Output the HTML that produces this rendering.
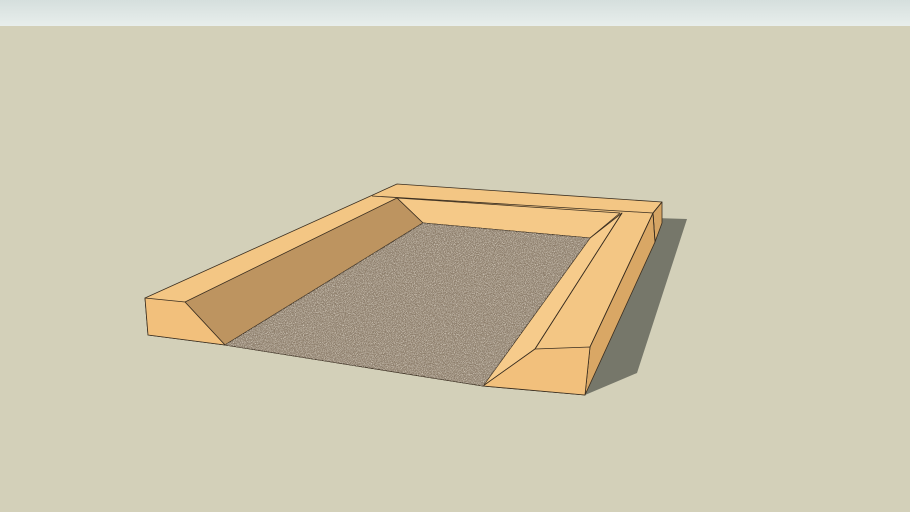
<!DOCTYPE html>
<html><head><style>
html,body{margin:0;padding:0;width:910px;height:512px;overflow:hidden;background:#d3d0b9;}
.sky{position:absolute;left:0;top:0;width:910px;height:26px;background:linear-gradient(#d5dfdd,#e8eeec);}
svg{position:absolute;left:0;top:0;}
</style></head><body>
<div class="sky"></div>
<svg width="910" height="512" viewBox="0 0 910 512">
<defs>
<filter id="n" x="0" y="0" width="100%" height="100%">
<feTurbulence type="fractalNoise" baseFrequency="1.1" numOctaves="2" seed="3"/>
<feColorMatrix values="0 0 0 0 0.72  0 0 0 0 0.66  0 0 0 0 0.56  0 0 0 2.6 -1.0"/>
</filter>
<filter id="d" x="0" y="0" width="100%" height="100%">
<feTurbulence type="fractalNoise" baseFrequency="1.3" numOctaves="1" seed="9"/>
<feColorMatrix values="0 0 0 0 0.3  0 0 0 0 0.25  0 0 0 0 0.2  0 0 0 2.6 -1.1"/>
</filter>
<clipPath id="g"><polygon points="423,223 590,238 483,386 225,345"/></clipPath>
</defs>
<g stroke="#3a2e20" stroke-width="0.8" stroke-linejoin="round">
<!-- shadow -->
<polygon points="655,218 687,219 637,373 585,395" fill="#76776a" stroke="none"/>
<!-- whole top light -->
<polygon points="145,298 397,184 662,202 653,213 590,347 585,395 483,386 225,345 148,335" fill="#f3c684"/>
<!-- back beam end face -->
<polygon points="662,202 653,213 655,242 662,223" fill="#d6a564"/>
<!-- right outer side face -->
<polygon points="653,213 655,242 585,395 590,347" fill="#d9a765"/>
<!-- back beam inner face -->
<polygon points="397,198 620,213 590,238 423,223" fill="#f5c988"/>
<!-- left slope -->
<polygon points="185,302 397,198 423,223 225,345" fill="#bd9460"/>
<!-- right slope -->
<polygon points="483,386 535,349 622,213 590,238" fill="#f6cb8b"/>
<!-- left front face -->
<polygon points="145,298 185,302 225,345 148,335" fill="#f2c07c"/>
<!-- right front face -->
<polygon points="535,349 590,347 585,395 483,386" fill="#f2c07c"/>
<!-- gravel -->
<polygon points="423,223 590,238 483,386 225,345" fill="#8a7a66"/>
<rect x="220" y="215" width="380" height="180" filter="url(#n)" clip-path="url(#g)" stroke="none"/>
<rect x="220" y="215" width="380" height="180" filter="url(#d)" clip-path="url(#g)" stroke="none"/>
<!-- lines -->
<polyline points="372,196 653,213" fill="none"/>
<polyline points="590,347 653,213" fill="none"/>
<polyline points="653,213 662,202" fill="none"/>
<polyline points="653,213 655,242" fill="none"/>
<polyline points="622,213 535,349" fill="none"/>
</g>
</svg>
</body></html>
